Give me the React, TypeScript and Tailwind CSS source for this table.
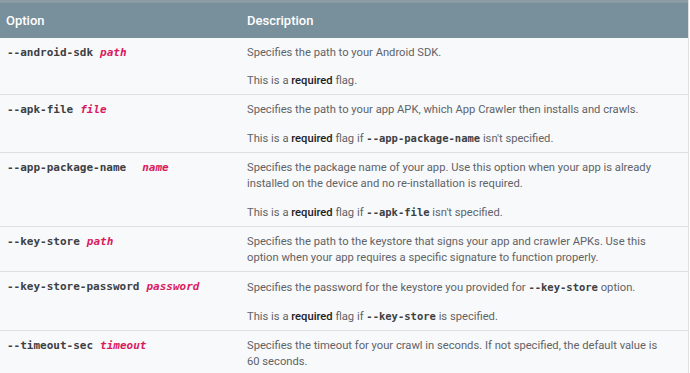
import React from 'react';

type Row = {
  flag: string;
  arg: string;
  wide?: boolean;
  desc: React.ReactNode[];
};

const Code: React.FC<{ children: React.ReactNode }> = ({ children }) => (
  <code className="font-['DejaVu_Sans_Mono',monospace] font-bold text-[#3c4043] text-[10.5px]">{children}</code>
);

const Req: React.FC = () => <b className="font-medium text-[#202124]">required</b>;

const rows: Row[] = [
  {
    flag: '--android-sdk',
    arg: 'path',
    desc: ['Specifies the path to your Android SDK.', <>This is a <Req /> flag.</>],
  },
  {
    flag: '--apk-file',
    arg: 'file',
    desc: [
      'Specifies the path to your app APK, which App Crawler then installs and crawls.',
      <>This is a <Req /> flag if <Code>--app-package-name</Code> isn't specified.</>,
    ],
  },
  {
    flag: '--app-package-name',
    arg: 'name',
    wide: true,
    desc: [
      'Specifies the package name of your app. Use this option when your app is already installed on the device and no re-installation is required.',
      <>This is a <Req /> flag if <Code>--apk-file</Code> isn't specified.</>,
    ],
  },
  {
    flag: '--key-store',
    arg: 'path',
    desc: [
      'Specifies the path to the keystore that signs your app and crawler APKs. Use this option when your app requires a specific signature to function properly.',
    ],
  },
  {
    flag: '--key-store-password',
    arg: 'password',
    desc: [
      <>Specifies the password for the keystore you provided for <Code>--key-store</Code> option.</>,
      <>This is a <Req /> flag if <Code>--key-store</Code> is specified.</>,
    ],
  },
  {
    flag: '--timeout-sec',
    arg: 'timeout',
    desc: [
      'Specifies the timeout for your crawl in seconds. If not specified, the default value is 60 seconds.',
    ],
  },
];

export default function App() {
  return (
    <div className="w-[690px] h-[373px] overflow-hidden bg-white font-['Roboto',sans-serif]">
      <div className="w-[689px] border-r border-[#e0e0e0]">
        <div className="flex h-[38px] items-center bg-[#78909c] border-t-[3px] border-[#8c9ca5] text-white font-medium text-[13px]">
          <div className="w-[247px] pl-[6px]">Option</div>
          <div className="flex-1">Description</div>
        </div>
        {rows.map((row) => (
          <div key={row.flag} className="flex bg-[#f8f9fa] border-b border-[#e0e0e0] pt-[7px] pb-[5px]">
            <div className="w-[247px] pl-[7px] leading-[16px] font-['DejaVu_Sans_Mono',monospace] text-[11px]">
              <span className="font-bold text-[#3c4043]">{row.flag}</span>
              <span className={row.wide ? 'ml-[16px]' : 'ml-[7px]'}>
                <span className="font-bold italic text-[#d81b60]">{row.arg}</span>
              </span>
            </div>
            <div className="flex-1 pr-[20px] flex flex-col gap-[12px] text-[11.2px] leading-[16px] text-[#5f6368]">
              {row.desc.map((d, i) => (
                <p key={i}>{d}</p>
              ))}
            </div>
          </div>
        ))}
      </div>
    </div>
  );
}
